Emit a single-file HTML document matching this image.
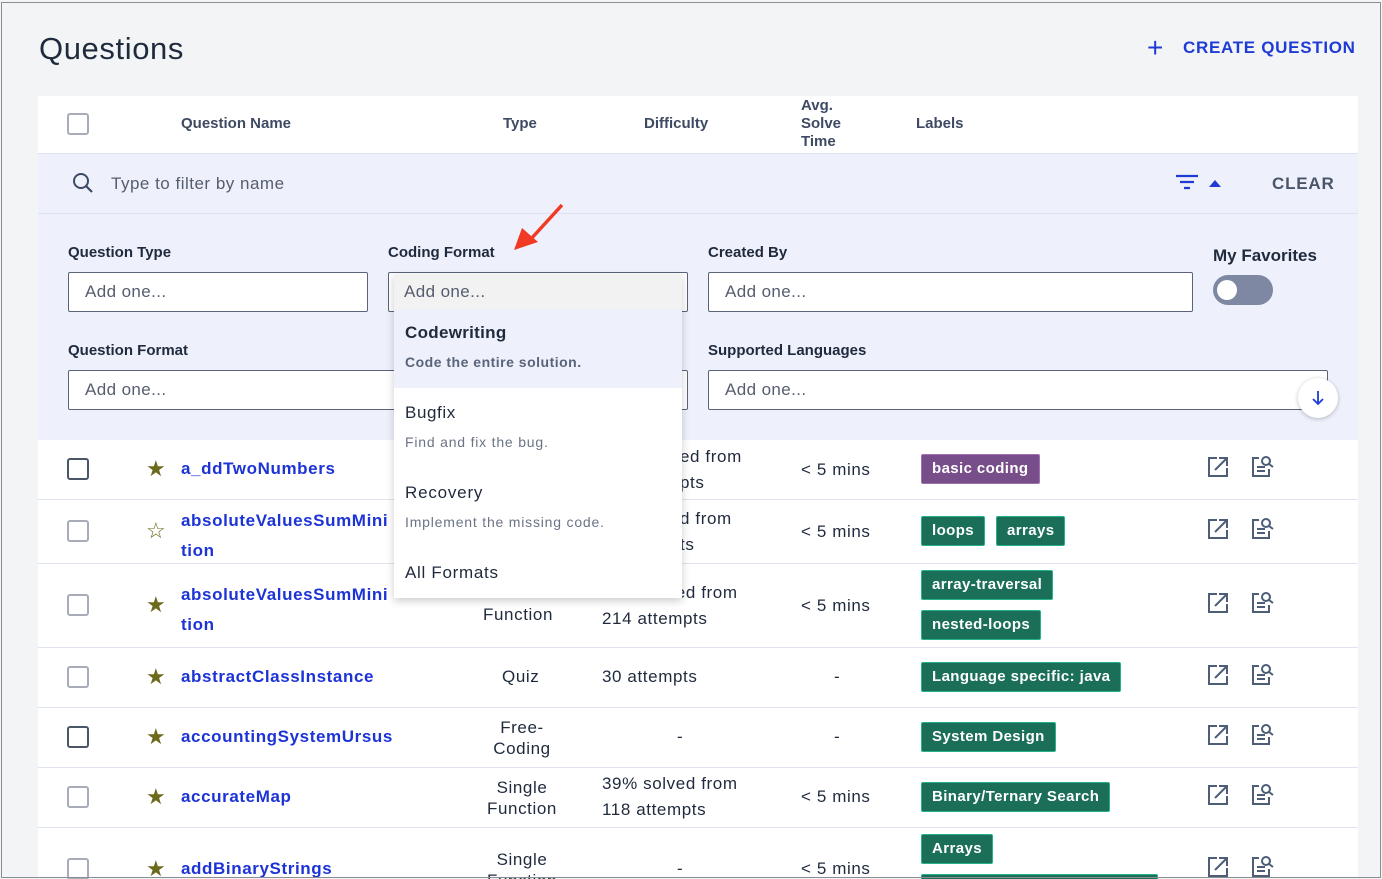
<!DOCTYPE html>
<html><head><meta charset="utf-8"><style>
*{box-sizing:border-box;margin:0;padding:0}
html,body{width:1382px;height:879px;overflow:hidden}
body{background:#f3f4f6;font-family:"Liberation Sans",sans-serif;color:#1f2a3d;position:relative}
#w{position:absolute;left:0;top:0;width:1382px;height:879px;overflow:hidden}
.a{position:absolute;white-space:nowrap}
.frame{position:absolute;left:1px;top:2px;width:1380px;height:876px;border:1px solid #8a8d93;pointer-events:none;z-index:50}
.panel{position:absolute;left:38px;top:96px;width:1320px;height:782px;background:#fff}
.th{font-weight:bold;font-size:15px;color:#3e4a63}
.lbl{font-weight:bold;font-size:15px;color:#1f2a3d}
.inp{position:absolute;height:40px;border:1px solid #5a6478;border-radius:2px;background:#fff;font-size:17px;color:#555d6e;padding:9px 16px;letter-spacing:.4px}
.cb{position:absolute;width:22px;height:22px;border:2px solid #a6adb8;border-radius:3px;background:#fff}
.cb.d{border-color:#4a5568}
.line{position:absolute;left:38px;width:1320px;height:1px;background:#dfe4ef}
.name{font-weight:bold;font-size:17px;color:#1c33d6;letter-spacing:.6px}
.t{font-size:17px;color:#1f2a3d;letter-spacing:.6px}
.tag{position:absolute;height:30px;background:#1b6e58;border:1px solid #22b38a;border-radius:2px;color:#fff;font-weight:bold;font-size:15px;padding:5px 10px;white-space:nowrap;letter-spacing:.4px}
.star{font-size:22px;color:#6e6a1c;line-height:24px}
</style></head><body><div id="w">
<div class="frame"></div>
<div class="a" style="left:39px;top:31px;font-size:31px;color:#1f2a3d;letter-spacing:.6px">Questions</div>
<div class="a" style="left:1147px;top:36px;font-size:28px;color:#1f3bd6;line-height:24px">+</div>
<div class="a" style="left:1183px;top:38px;font-size:17px;font-weight:bold;color:#1f3bd6;letter-spacing:.7px">CREATE QUESTION</div>

<div class="panel"></div>
<div class="cb" style="left:67px;top:113px"></div>
<div class="a th" style="left:181px;top:115px">Question Name</div>
<div class="a th" style="left:503px;top:115px">Type</div>
<div class="a th" style="left:644px;top:115px">Difficulty</div>
<div class="a th" style="left:801px;top:97px;line-height:18px">Avg.<br>Solve<br>Time</div>
<div class="a th" style="left:916px;top:115px">Labels</div>

<div class="a" style="left:38px;top:153px;width:1320px;height:287px;background:#eef1fb;border-top:1px solid #dde3f3"></div>
<div class="a" style="left:38px;top:213px;width:1320px;height:1px;background:#dde3f3"></div>
<svg class="a" style="left:71px;top:171px" width="24" height="24" viewBox="0 0 24 24"><circle cx="10" cy="10" r="7" fill="none" stroke="#3e4a63" stroke-width="2"/><path d="M15 15l6 6" stroke="#3e4a63" stroke-width="2.2"/></svg>
<div class="a" style="left:111px;top:174px;font-size:17px;color:#555d6e;letter-spacing:.5px">Type to filter by name</div>
<svg class="a" style="left:1175px;top:174px" width="50" height="20" viewBox="0 0 50 20"><path d="M1 2h22M5 8h14M9 14h6" stroke="#1f3bd6" stroke-width="2.2"/><path d="M34 13l6-7 6 7z" fill="#1f3bd6"/></svg>
<div class="a" style="left:1272px;top:174px;font-size:17px;font-weight:bold;color:#4a5568;letter-spacing:.8px">CLEAR</div>

<div class="a lbl" style="left:68px;top:244px">Question Type</div>
<div class="a lbl" style="left:388px;top:244px">Coding Format</div>
<div class="a lbl" style="left:708px;top:244px">Created By</div>
<div class="a lbl" style="left:1213px;top:246px;font-size:17px">My Favorites</div>
<div class="inp" style="left:68px;top:272px;width:300px">Add one...</div>
<div class="inp" style="left:388px;top:272px;width:300px"></div>
<div class="inp" style="left:708px;top:272px;width:485px">Add one...</div>
<div class="a" style="left:1213px;top:275px;width:60px;height:30px;border-radius:15px;background:#7e88a2"></div>
<div class="a" style="left:1217px;top:280px;width:20px;height:20px;border-radius:10px;background:#fff"></div>
<div class="a lbl" style="left:68px;top:342px">Question Format</div>
<div class="a lbl" style="left:708px;top:342px">Supported Languages</div>
<div class="inp" style="left:68px;top:370px;width:620px">Add one...</div>
<div class="inp" style="left:708px;top:370px;width:620px">Add one...</div>
<div class="a" style="left:1298px;top:378px;width:40px;height:40px;border-radius:20px;background:#fff;box-shadow:0 1px 4px rgba(0,0,0,.25)"></div>
<svg class="a" style="left:1310px;top:389px" width="16" height="18" viewBox="0 0 16 18"><path d="M8 2v13M3 10l5 5 5-5" fill="none" stroke="#1f3bd6" stroke-width="1.8"/></svg>
<svg class="a" style="left:510px;top:202px" width="60" height="50" viewBox="0 0 60 50"><path d="M52 3L20 38" stroke="#f03a24" stroke-width="3.5"/><path d="M4 48l8-22 16 14z" fill="#f03a24"/></svg>

<div class="line" style="top:499px"></div>
<div class="line" style="top:563px"></div>
<div class="line" style="top:647px"></div>
<div class="line" style="top:707px"></div>
<div class="line" style="top:767px"></div>
<div class="line" style="top:827px"></div>

<div class="cb d" style="left:67px;top:458px"></div>
<div class="a star" style="left:146px;top:457px">★</div>
<div class="a name" style="left:181px;top:459px">a_ddTwoNumbers</div>
<div class="a t" style="left:680px;top:444px;line-height:26px">ed from<br>pts</div>
<div class="a t" style="left:801px;top:460px">&lt; 5 mins</div>
<div class="tag" style="left:921px;top:454px;background:#774d8a;border-color:#a070b0">basic coding</div>

<div class="cb" style="left:67px;top:520px"></div>
<div class="a star" style="left:146px;top:519px">☆</div>
<div class="a name" style="left:181px;top:506px;line-height:30px">absoluteValuesSumMini<br>tion</div>
<div class="a t" style="left:680px;top:506px;line-height:26px">d from<br>ts</div>
<div class="a t" style="left:801px;top:522px">&lt; 5 mins</div>
<div class="tag" style="left:921px;top:516px">loops</div>
<div class="tag" style="left:996px;top:516px">arrays</div>

<div class="cb" style="left:67px;top:594px"></div>
<div class="a star" style="left:146px;top:593px">★</div>
<div class="a name" style="left:181px;top:580px;line-height:30px">absoluteValuesSumMini<br>tion</div>
<div class="a t" style="left:483px;top:605px">Function</div>
<div class="a t" style="left:602px;top:580px;line-height:26px">61% solved from<br>214 attempts</div>
<div class="a t" style="left:801px;top:596px">&lt; 5 mins</div>
<div class="tag" style="left:921px;top:570px">array-traversal</div>
<div class="tag" style="left:921px;top:610px">nested-loops</div>

<div class="cb" style="left:67px;top:666px"></div>
<div class="a star" style="left:146px;top:665px">★</div>
<div class="a name" style="left:181px;top:667px">abstractClassInstance</div>
<div class="a t" style="left:502px;top:667px">Quiz</div>
<div class="a t" style="left:602px;top:667px">30 attempts</div>
<div class="a t" style="left:834px;top:667px">-</div>
<div class="tag" style="left:921px;top:662px">Language specific: java</div>

<div class="cb d" style="left:67px;top:726px"></div>
<div class="a star" style="left:146px;top:725px">★</div>
<div class="a name" style="left:181px;top:727px">accountingSystemUrsus</div>
<div class="a t" style="left:482px;top:717px;line-height:21px;text-align:center;width:80px">Free-<br>Coding</div>
<div class="a t" style="left:677px;top:727px">-</div>
<div class="a t" style="left:834px;top:727px">-</div>
<div class="tag" style="left:921px;top:722px">System Design</div>

<div class="cb" style="left:67px;top:786px"></div>
<div class="a star" style="left:146px;top:785px">★</div>
<div class="a name" style="left:181px;top:787px">accurateMap</div>
<div class="a t" style="left:481px;top:777px;line-height:21px;text-align:center;width:82px">Single<br>Function</div>
<div class="a t" style="left:602px;top:771px;line-height:26px">39% solved from<br>118 attempts</div>
<div class="a t" style="left:801px;top:787px">&lt; 5 mins</div>
<div class="tag" style="left:921px;top:782px">Binary/Ternary Search</div>

<div class="cb" style="left:67px;top:858px"></div>
<div class="a star" style="left:146px;top:857px">★</div>
<div class="a name" style="left:181px;top:859px">addBinaryStrings</div>
<div class="a t" style="left:481px;top:849px;line-height:21px;text-align:center;width:82px">Single<br>Function</div>
<div class="a t" style="left:677px;top:859px">-</div>
<div class="a t" style="left:801px;top:859px">&lt; 5 mins</div>
<div class="tag" style="left:921px;top:834px">Arrays</div>
<div class="tag" style="left:921px;top:874px;width:237px"></div>

<svg width="0" height="0" style="position:absolute"><defs>
<g id="ext"><path d="M11 3H3v18h18v-8" fill="none" stroke="#4e5d78" stroke-width="2"/><path d="M9 15L20 4M13 3h8v8" fill="none" stroke="#4e5d78" stroke-width="2"/></g>
<g id="doc"><path d="M9 4H3v18h16v-7" fill="none" stroke="#4e5d78" stroke-width="2"/><path d="M7 13h8M7 17h8" stroke="#4e5d78" stroke-width="2"/><circle cx="16" cy="7" r="4" fill="none" stroke="#4e5d78" stroke-width="2"/><path d="M19 10l4 3" stroke="#4e5d78" stroke-width="2"/></g>
</defs></svg>
<svg class="a" style="left:1206px;top:455px" width="26" height="26"><use href="#ext"/></svg><svg class="a" style="left:1250px;top:454px" width="26" height="26"><use href="#doc"/></svg>
<svg class="a" style="left:1206px;top:517px" width="26" height="26"><use href="#ext"/></svg><svg class="a" style="left:1250px;top:516px" width="26" height="26"><use href="#doc"/></svg>
<svg class="a" style="left:1206px;top:591px" width="26" height="26"><use href="#ext"/></svg><svg class="a" style="left:1250px;top:590px" width="26" height="26"><use href="#doc"/></svg>
<svg class="a" style="left:1206px;top:663px" width="26" height="26"><use href="#ext"/></svg><svg class="a" style="left:1250px;top:662px" width="26" height="26"><use href="#doc"/></svg>
<svg class="a" style="left:1206px;top:723px" width="26" height="26"><use href="#ext"/></svg><svg class="a" style="left:1250px;top:722px" width="26" height="26"><use href="#doc"/></svg>
<svg class="a" style="left:1206px;top:783px" width="26" height="26"><use href="#ext"/></svg><svg class="a" style="left:1250px;top:782px" width="26" height="26"><use href="#doc"/></svg>
<svg class="a" style="left:1206px;top:855px" width="26" height="26"><use href="#ext"/></svg><svg class="a" style="left:1250px;top:854px" width="26" height="26"><use href="#doc"/></svg>

<div class="a" style="left:394px;top:274px;width:288px;height:324px;background:#fff;box-shadow:0 3px 8px rgba(0,0,0,.2);z-index:10">
 <div style="height:35px;background:#f2f2f3;font-size:17px;color:#555d6e;padding:8px 10px;letter-spacing:.4px">Add one...</div>
 <div style="height:79px;background:#eef1fb;padding:14px 11px 0">
  <div style="font-weight:bold;font-size:17px;color:#1f2a3d;letter-spacing:.3px">Codewriting</div>
  <div style="font-weight:bold;font-size:14px;color:#59647a;margin-top:11px;letter-spacing:.5px">Code the entire solution.</div>
 </div>
 <div style="height:80px;padding:15px 11px 0">
  <div style="font-size:17px;color:#1f2a3d;letter-spacing:.6px">Bugfix</div>
  <div style="font-size:14px;color:#6b7486;margin-top:11px;letter-spacing:.8px">Find and fix the bug.</div>
 </div>
 <div style="height:80px;padding:15px 11px 0">
  <div style="font-size:17px;color:#1f2a3d;letter-spacing:.8px">Recovery</div>
  <div style="font-size:14px;color:#6b7486;margin-top:11px;letter-spacing:.8px">Implement the missing code.</div>
 </div>
 <div style="padding:15px 11px 0;font-size:17px;color:#1f2a3d;letter-spacing:.7px">All Formats</div>
</div>
</div></body></html>
